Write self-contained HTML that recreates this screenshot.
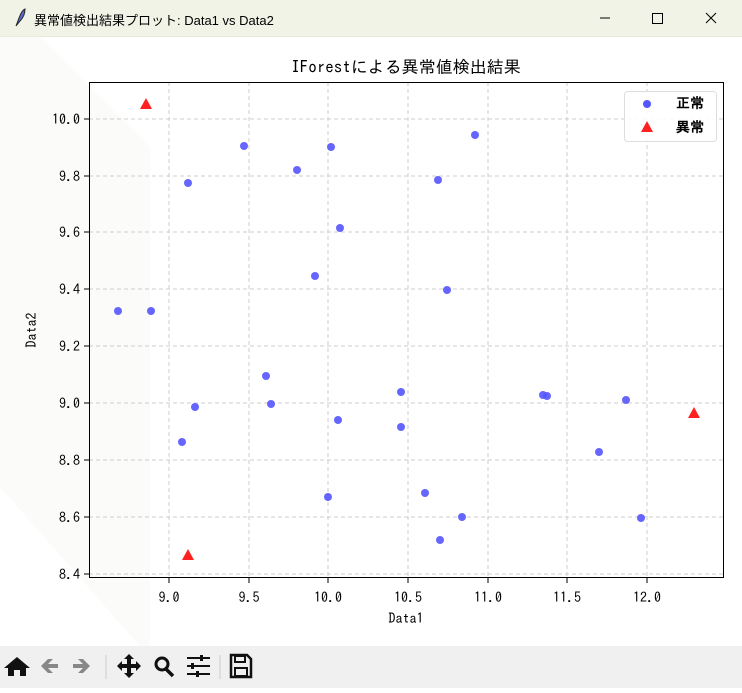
<!DOCTYPE html><html><head><meta charset="utf-8"><style>
body{margin:0;width:742px;height:688px;overflow:hidden;background:#fff;font-family:"Liberation Sans","Noto Sans CJK JP",sans-serif}
.tb{position:absolute;left:0;top:0;width:742px;height:36px;background:#f1f3e6;border-bottom:1px solid #e8eadc}
.tt{position:absolute;left:34px;top:10px;font-size:13px;color:#000}
.bot{position:absolute;left:0;top:646px;width:742px;height:42px;background:#f0f0f0}
</style></head><body>
<div class="tb"><svg style="position:absolute;left:13px;top:8px" width="14" height="20"><path d="M3 18 L6 10 Q9 2 12 1 Q12 8 7 13 Z" fill="#5a6bd0" stroke="#222" stroke-width="1"/></svg>
<div class="tt">異常値検出結果プロット: Data1 vs Data2</div>
<svg style="position:absolute;left:600px;top:10px" width="130" height="16"><line x1="0" y1="8" x2="10" y2="8" stroke="#000"/><rect x="52.5" y="3.5" width="10" height="10" fill="none" stroke="#000"/><path d="M106 3L116 13M116 3L106 13" stroke="#000"/></svg></div>
<svg style="position:absolute;left:0;top:37px" width="742" height="609" font-family="IPAGothic, Noto Sans CJK JP, monospace">
<polygon points="0,0 40,0 150,110 150,609 140,609 0,450" fill="#fbfbf9"/>
<g transform="translate(0,-37)">
<text x="406" y="73" text-anchor="middle" font-size="17">IForestによる異常値検出結果</text>
<g stroke="#ccc" stroke-dasharray="4,3" stroke-width="1">
<line x1="169" y1="82" x2="169" y2="578"/><line x1="249" y1="82" x2="249" y2="578"/><line x1="328" y1="82" x2="328" y2="578"/><line x1="408" y1="82" x2="408" y2="578"/><line x1="488" y1="82" x2="488" y2="578"/><line x1="567" y1="82" x2="567" y2="578"/><line x1="647" y1="82" x2="647" y2="578"/>
<line x1="89" y1="119" x2="724" y2="119"/><line x1="89" y1="176" x2="724" y2="176"/><line x1="89" y1="232" x2="724" y2="232"/><line x1="89" y1="289" x2="724" y2="289"/><line x1="89" y1="346" x2="724" y2="346"/><line x1="89" y1="403" x2="724" y2="403"/><line x1="89" y1="460" x2="724" y2="460"/><line x1="89" y1="517" x2="724" y2="517"/><line x1="89" y1="574" x2="724" y2="574"/>
</g>
<rect x="89.5" y="82.5" width="634" height="495" fill="none" stroke="#000"/>
<g stroke="#000"><line x1="84" y1="119" x2="89" y2="119"/><line x1="84" y1="176" x2="89" y2="176"/><line x1="84" y1="232" x2="89" y2="232"/><line x1="84" y1="289" x2="89" y2="289"/><line x1="84" y1="346" x2="89" y2="346"/><line x1="84" y1="403" x2="89" y2="403"/><line x1="84" y1="460" x2="89" y2="460"/><line x1="84" y1="517" x2="89" y2="517"/><line x1="84" y1="574" x2="89" y2="574"/>
<line x1="169" y1="578" x2="169" y2="583"/><line x1="249" y1="578" x2="249" y2="583"/><line x1="328" y1="578" x2="328" y2="583"/><line x1="408" y1="578" x2="408" y2="583"/><line x1="488" y1="578" x2="488" y2="583"/><line x1="567" y1="578" x2="567" y2="583"/><line x1="647" y1="578" x2="647" y2="583"/></g>
<g font-size="14" text-anchor="end"><text x="80" y="124">10.0</text><text x="80" y="181">9.8</text><text x="80" y="237">9.6</text><text x="80" y="294">9.4</text><text x="80" y="351">9.2</text><text x="80" y="408">9.0</text><text x="80" y="465">8.8</text><text x="80" y="522">8.6</text><text x="80" y="579">8.4</text></g>
<g font-size="14" text-anchor="middle"><text x="169" y="602">9.0</text><text x="249" y="602">9.5</text><text x="328" y="602">10.0</text><text x="408" y="602">10.5</text><text x="488" y="602">11.0</text><text x="567" y="602">11.5</text><text x="647" y="602">12.0</text>
<text x="406" y="623">Data1</text><text transform="translate(36,330) rotate(-90)">Data2</text></g>
<g fill="#5555ff" fill-opacity="0.9">
<circle cx="244" cy="146" r="4"/><circle cx="331" cy="147" r="4"/><circle cx="475" cy="135" r="4"/><circle cx="297" cy="170" r="4"/><circle cx="188" cy="183" r="4"/><circle cx="438" cy="180" r="4"/><circle cx="340" cy="228" r="4"/><circle cx="315" cy="276" r="4"/><circle cx="447" cy="290" r="4"/><circle cx="118" cy="311" r="4"/><circle cx="151" cy="311" r="4"/><circle cx="266" cy="376" r="4"/><circle cx="401" cy="392" r="4"/><circle cx="271" cy="404" r="4"/><circle cx="195" cy="407" r="4"/><circle cx="543" cy="395" r="4"/><circle cx="547" cy="396" r="4"/><circle cx="626" cy="400" r="4"/><circle cx="338" cy="420" r="4"/><circle cx="401" cy="427" r="4"/><circle cx="182" cy="442" r="4"/><circle cx="599" cy="452" r="4"/><circle cx="328" cy="497" r="4"/><circle cx="425" cy="493" r="4"/><circle cx="462" cy="517" r="4"/><circle cx="440" cy="540" r="4"/><circle cx="641" cy="518" r="4"/></g>
<g fill="#ff2020"><polygon points="146,98 152,109 140,109"/><polygon points="694,407 700,418 688,418"/><polygon points="188,549 194,560 182,560"/>
<rect x="624.5" y="91.5" width="92" height="50" rx="3" fill="#fff" fill-opacity="0.85" stroke="#ddd"/>
<circle cx="647" cy="104" r="4" fill="#5555ff"/><polygon points="647,121 653,132 641,132"/></g>
<g font-size="14" font-weight="bold"><text x="676" y="108">正常</text><text x="676" y="132">異常</text></g>
</g></svg>
<div class="bot"><svg width="280" height="42">
<path d="M8 30V22L4 22L17 11L30 22H26V30H20V24H14V30Z" fill="#111"/>
<path d="M58 18H48L53 13H48L41 20L48 27H53L48 22H58Z" fill="#888"/>
<path d="M73 18H83L78 13H83L90 20L83 27H78L83 22H73Z" fill="#888"/>
<line x1="106" y1="9" x2="106" y2="33" stroke="#ccc"/>
<path d="M129 8L134 13H131V18H136V15L141 20L136 25V22H131V27H134L129 32L124 27H127V22H122V25L117 20L122 15V18H127V13H124Z" fill="#111"/>
<circle cx="162" cy="18" r="6" fill="none" stroke="#111" stroke-width="3"/><line x1="166" y1="23" x2="173" y2="30" stroke="#111" stroke-width="3.5"/>
<g stroke="#111" stroke-width="2"><line x1="187" y1="12" x2="210" y2="12"/><line x1="187" y1="20" x2="210" y2="20"/><line x1="187" y1="28" x2="210" y2="28"/></g><g fill="#111"><rect x="200" y="9" width="3" height="6"/><rect x="191" y="17" width="3" height="6"/><rect x="196" y="25" width="3" height="6"/></g>
<line x1="220" y1="9" x2="220" y2="33" stroke="#ccc"/>
<path d="M231 9H247L251 13V31H231Z" fill="none" stroke="#111" stroke-width="2.5"/><rect x="235" y="10" width="10" height="6" fill="none" stroke="#111" stroke-width="2"/><rect x="235" y="22" width="12" height="8" fill="none" stroke="#111" stroke-width="2"/>
</svg></div>
</body></html>
